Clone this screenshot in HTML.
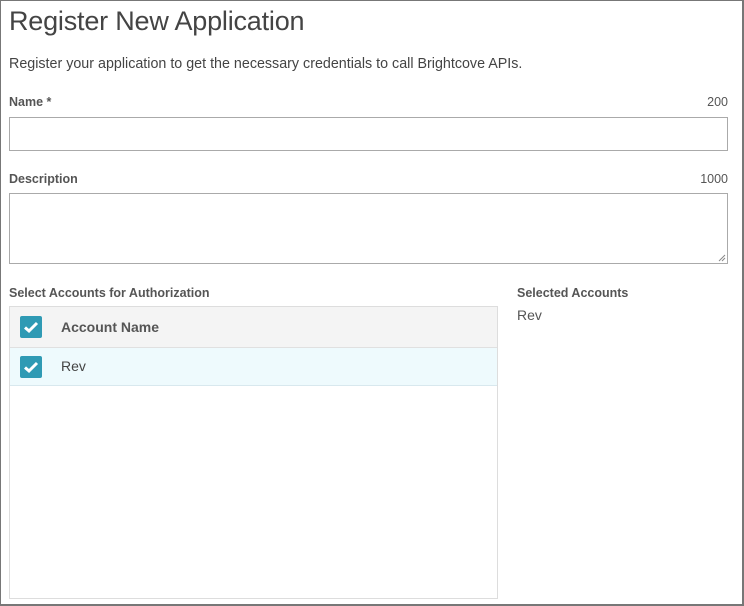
<!DOCTYPE html>
<html><head><style>
*{box-sizing:border-box;margin:0;padding:0}
body{width:744px;height:606px;overflow:hidden;background:#fff;font-family:"Liberation Sans",sans-serif;color:#555}
.frame{position:absolute;left:0;top:0;width:744px;height:606px;border:1px solid #777;border-right-width:2px;border-bottom-width:2px}
.abs{position:absolute;white-space:nowrap}
h1{position:absolute;left:9px;top:6px;font-size:27px;font-weight:normal;color:#444;letter-spacing:-0.2px}
.lbl{font-size:12.5px;font-weight:bold;color:#555}
.cnt{font-size:12.5px;color:#555}
.inp{position:absolute;border:1px solid #aaa;background:#fff}
.tbl{position:absolute;left:9px;top:306px;width:489px;height:293px;border:1px solid #ddd;background:#fff}
.hdr{position:absolute;left:0;top:0;width:487px;height:41px;background:#f4f4f4;border-bottom:1px solid #e0e0e0}
.row{position:absolute;left:0;top:41px;width:487px;height:38px;background:#eefafd;border-bottom:1px solid #d8e8ee}
.cb{position:absolute;left:10px;width:22px;height:22px;background:#2f9ab4;border-radius:2px}
.cb svg{position:absolute;left:3px;top:4px}
</style></head><body>
<div class="frame"></div>
<h1>Register New Application</h1>
<div class="abs" style="left:9px;top:56px;font-size:14.3px;color:#444">Register your application to get the necessary credentials to call Brightcove APIs.</div>
<div class="abs lbl" style="left:9px;top:95px">Name *</div>
<div class="abs cnt" style="right:16px;top:95px">200</div>
<div class="inp" style="left:9px;top:117px;width:719px;height:34px"></div>
<div class="abs lbl" style="left:9px;top:172px">Description</div>
<div class="abs cnt" style="right:16px;top:172px">1000</div>
<div class="inp" style="left:9px;top:193px;width:719px;height:71px">
<svg style="position:absolute;right:1px;bottom:1px" width="8" height="8"><path d="M7 1L1 7M7 4L4 7" stroke="#888" stroke-width="1"/></svg></div>
<div class="abs lbl" style="left:9px;top:286px">Select Accounts for Authorization</div>
<div class="abs lbl" style="left:517px;top:286px">Selected Accounts</div>
<div class="abs" style="left:517px;top:307px;font-size:14px;color:#555">Rev</div>
<div class="tbl">
 <div class="hdr"><div class="cb" style="top:9px"><svg width="16" height="14"><path d="M2 7.5L6 11L14 3" stroke="#fff" stroke-width="3" fill="none"/></svg></div>
 <div class="abs" style="left:51px;top:12px;font-size:14px;font-weight:bold;color:#555">Account Name</div></div>
 <div class="row"><div class="cb" style="top:8px"><svg width="16" height="14"><path d="M2 7.5L6 11L14 3" stroke="#fff" stroke-width="3" fill="none"/></svg></div>
 <div class="abs" style="left:51px;top:10px;font-size:14px;color:#444">Rev</div></div>
</div>
</body></html>
